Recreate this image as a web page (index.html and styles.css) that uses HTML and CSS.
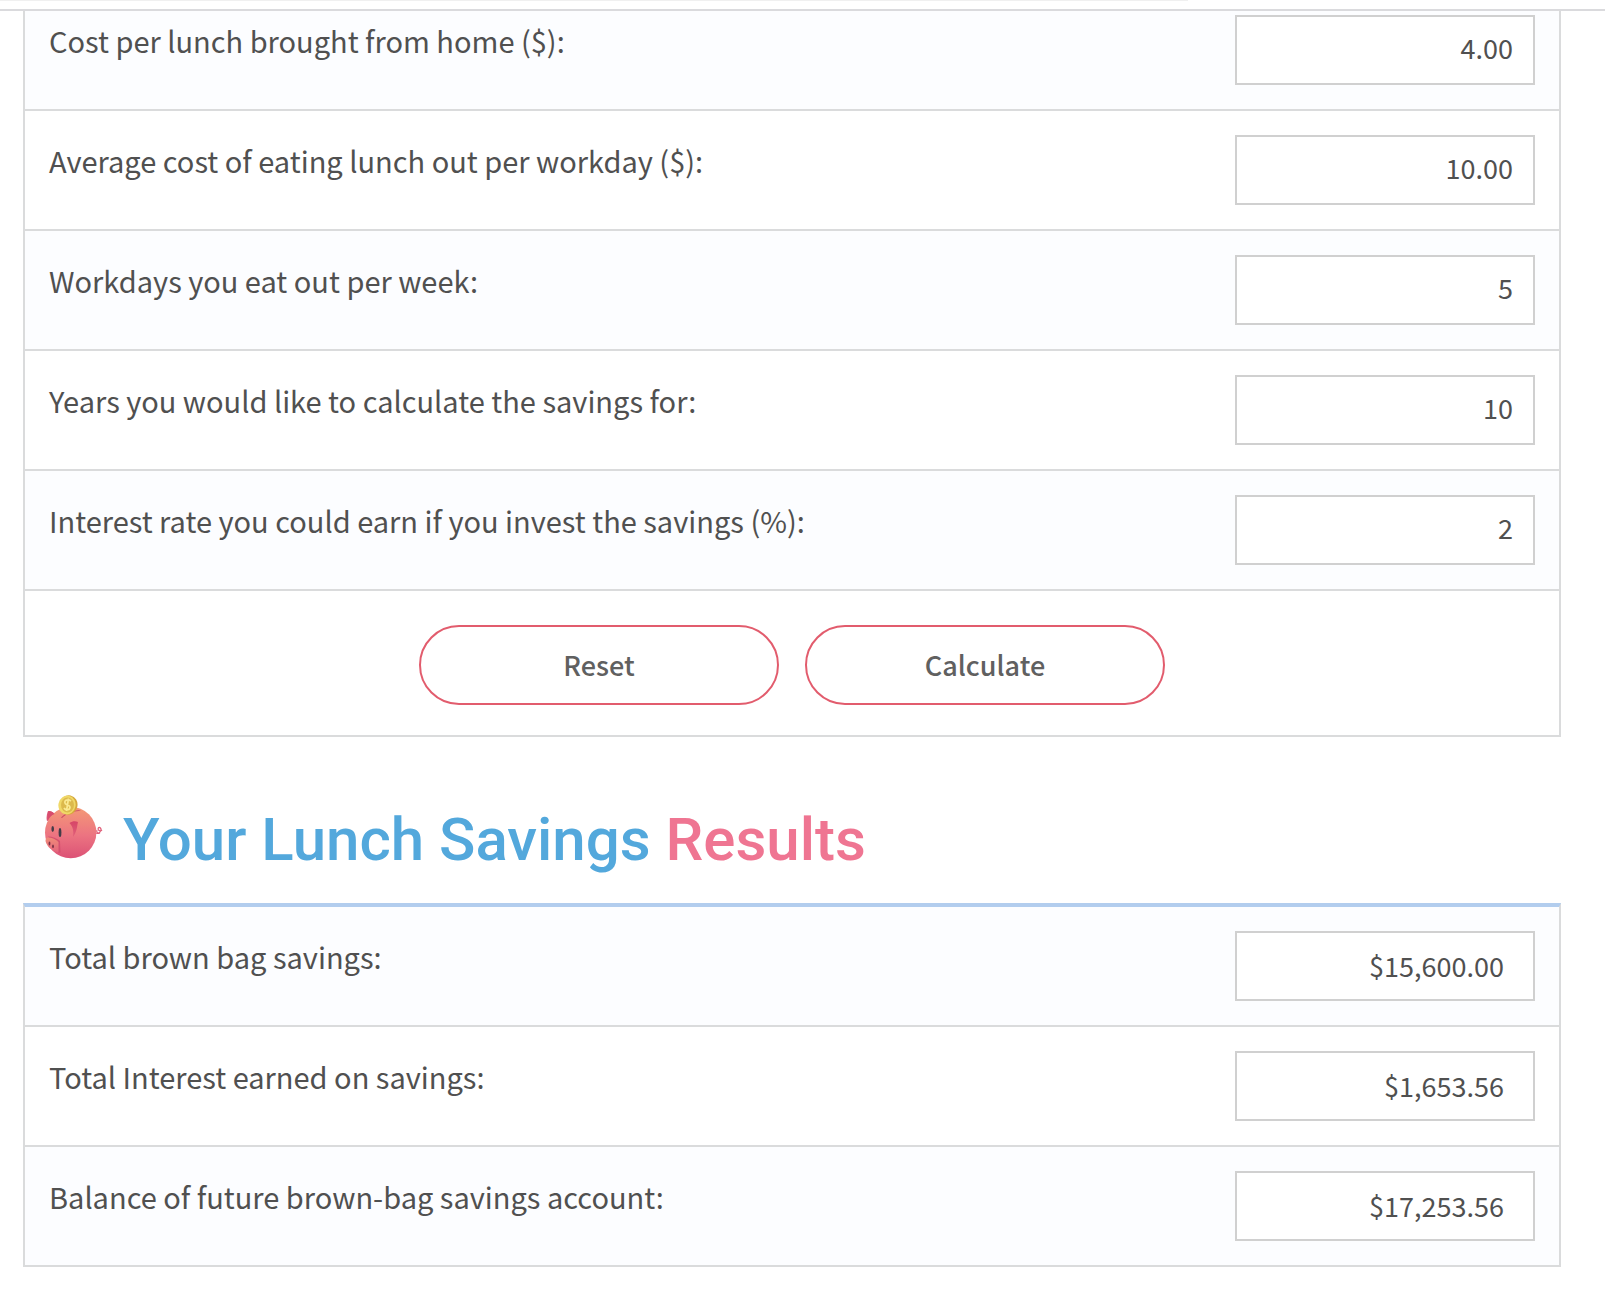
FILE: index.html
```html
<!DOCTYPE html>
<html lang="en">
<head>
<meta charset="utf-8">
<meta name="viewport" content="width=device-width, initial-scale=1">
<title>Brown Bag Savings Calculator</title>
<link rel="stylesheet" href="styles.css">
</head>
<body>
<header class="topbar"><div class="progress"></div></header>
<main class="page">
  <form class="panel" id="lunch">
    <div class="row row-first"><label for="home">Cost per lunch brought from home ($):</label><input class="field" id="home" type="text" value="4.00"></div>
    <div class="row"><label for="out">Average cost of eating lunch out per workday ($):</label><input class="field" id="out" type="text" value="10.00"></div>
    <div class="row"><label for="days">Workdays you eat out per week:</label><input class="field" id="days" type="text" value="5"></div>
    <div class="row"><label for="years">Years you would like to calculate the savings for:</label><input class="field" id="years" type="text" value="10"></div>
    <div class="row"><label for="rate">Interest rate you could earn if you invest the savings (%):</label><input class="field" id="rate" type="text" value="2"></div>
    <div class="actions">
      <button class="btn" type="reset">Reset</button>
      <button class="btn" type="button">Calculate</button>
    </div>
  </form>

  <div class="heading">
    <svg class="pig" viewBox="0 0 60 64" aria-hidden="true">
      <defs>
        <linearGradient id="skin" x1="0" y1="0" x2="0" y2="1"><stop offset="0" stop-color="#f49a76"/><stop offset=".55" stop-color="#ec7481"/><stop offset="1" stop-color="#dc5276"/></linearGradient>
        <linearGradient id="snout" x1="0" y1="0" x2="0" y2="1"><stop offset="0" stop-color="#f08c78"/><stop offset="1" stop-color="#e4647d"/></linearGradient>
        <linearGradient id="ear" x1="0" y1="0" x2="0" y2="1"><stop offset="0" stop-color="#d74567"/><stop offset="1" stop-color="#e0607a"/></linearGradient>
      </defs>
      <path d="M52.500 38c3 1 6-1 5.500-4-1-3-4-1-2.500 1 1 1 2.500 1 3.500 0M54 35c-1 2 1 4 3 3" fill="none" stroke="#e0607a" stroke-width="1.200"/>
      <path d="M4 26c-1-3 0-8 1-10 3 0 5 1 7 3l-4 6z" fill="#dc5677"/>
      <circle cx="27.700" cy="37.500" r="25.700" fill="url(#skin)"/>
      <path d="M4.500 25L5.500 16c3 0 4 1 6 3-3 1-5 3-7 6z" fill="#d84c6d"/>
      <path d="M18 22.500c5-5 13-8 20-7-6 1-14 2-19 7.500z" fill="#c94764"/>
      <path d="M26.500 28c3-2 6-2 8.500-1-1 4-1 10-5 15 1-6 0-10-3.500-14z" fill="url(#ear)"/>
      <path d="M5 41.500c4 0 9 2 12 4.500l.500 11.500-2 .500z" fill="#d4506e"/>
      <path d="M5 42.500c4 0 8 2 10.500 4.500v10.500C9 56 4 52 2.500 46c0-2 1-3.500 2.500-3.500z" fill="url(#snout)"/>
      <ellipse cx="9.700" cy="34" rx="1.300" ry="3" fill="#433c48"/>
      <ellipse cx="17" cy="37.400" rx="1.400" ry="4.500" fill="#433c48"/>
      <ellipse cx="6.500" cy="48.500" rx=".9" ry="1.900" fill="#7b3447"/>
      <ellipse cx="10" cy="51.300" rx=".9" ry="1.900" fill="#7b3447"/>
      <ellipse cx="25.500" cy="10" rx="9" ry="9.800" fill="#d5a83c" transform="rotate(12 25.500 10)"/>
      <ellipse cx="24" cy="10" rx="8.600" ry="9.500" fill="#f0d867" transform="rotate(12 24 10)"/>
      <ellipse cx="24.500" cy="10" rx="6.500" ry="7.500" fill="#dcb94c"/>
      <path d="M28 6c-3-2-7-1-6 2 0 2 5 2 5 4 0 3-4 4-6 1M25.500 3.500L23.500 16" fill="none" stroke="#fae991" stroke-width="1.700"/>
    </svg>
    <h2 class="title">Your Lunch Savings <span class="accent">Results</span></h2>
  </div>

  <section class="panel panel-results">
    <div class="row"><label for="total">Total brown bag savings:</label><output class="field result" id="total">$15,600.00</output></div>
    <div class="row"><label for="interest">Total Interest earned on savings:</label><output class="field result" id="interest">$1,653.56</output></div>
    <div class="row"><label for="balance">Balance of future brown-bag savings account:</label><output class="field result" id="balance">$17,253.56</output></div>
  </section>
</main>
</body>
</html>
```
FILE: styles.css
```css
* { box-sizing: border-box; }
body {
  margin: 0;
  background: #fff;
  color: #505050;
  font-family: "Noto Sans CJK SC", "Noto Sans", sans-serif;
  font-size: 29px;
}
.topbar { height: 11px; border-bottom: 2px solid #dadadd; }
.progress { width: 74%; height: 1px; background: #f0f0f0; }
.page { padding: 0 44px 44px 23px; }
.panel { border: 2px solid #dadbdc; border-top: 0; }
.row {
  display: flex;
  justify-content: space-between;
  align-items: flex-start;
  gap: 24px;
  padding: 24px;
  border-bottom: 2px solid #dadbdc;
}
.row:nth-child(odd) { background: #fcfdff; }
.row-first { padding-top: 4px; }
.row label { line-height: 50px; }
.field {
  flex: none;
  width: 300px;
  height: 70px;
  padding: 0 20px 6px;
  border: 2px solid #d0d0d0;
  border-radius: 0;
  background: #fff;
  color: #505050;
  font: inherit;
  font-size: 27px;
  text-align: right;
}
.result { padding: 0 29px; line-height: 66px; }
.actions { display: flex; justify-content: center; gap: 26px; padding: 34px 24px 30px; }
.btn {
  width: 360px;
  height: 80px;
  padding: 0 0 2px;
  border: 2px solid #e25c6d;
  border-radius: 40px;
  background: #fff;
  color: #606060;
  font: inherit;
  font-size: 27px;
  font-weight: 500;
}
.heading { display: flex; align-items: flex-start; gap: 20px; padding: 58px 0 0 20px; }
.pig { width: 60px; height: 64px; flex: none; }
.title {
  margin: 0;
  padding-top: 5px;
  color: #53a8dc;
  font-family: Roboto, sans-serif;
  font-size: 60px;
  font-weight: 500;
  line-height: 79px;
}
.accent { color: #ef7592; }
.panel-results { margin-top: 24px; border-top: 4px solid #b2cdee; }
.panel-results .row:last-child { border-bottom: 0; }
```
